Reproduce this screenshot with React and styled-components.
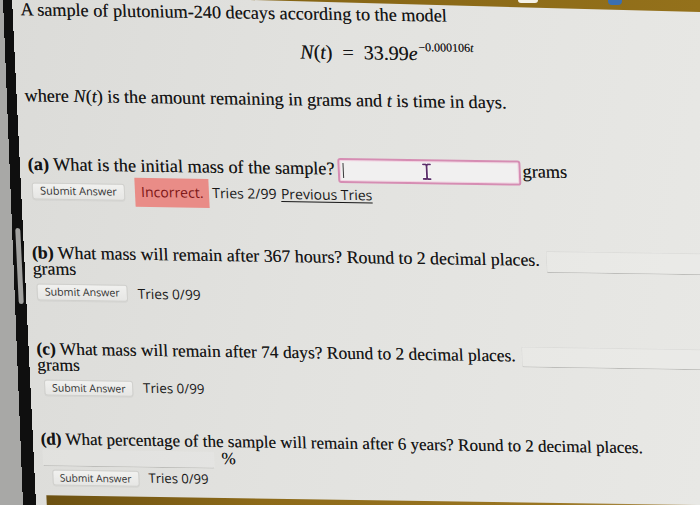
import React from "react";
import styled, { createGlobalStyle } from "styled-components";

const GlobalStyle = createGlobalStyle`
  html, body { margin: 0; padding: 0; background: #e2e2df; }
  body {
    font-family: "Liberation Serif", "Times New Roman", serif;
    color: #141414;
  }
`;

const Frame = styled.div`
  position: relative;
  width: 700px;
  height: 505px;
  overflow: hidden;
  background:
    linear-gradient(87.73deg, #a8a8a6 0 23px, transparent 23px),
    linear-gradient(87.28deg, #0f0f0f 0 36px, transparent 36px),
    linear-gradient(100deg, #dbdbd8 0%, #e2e2df 45%, #e8e8e5 100%);
`;

const ScrollThumb = styled.span`
  position: absolute;
  left: 17px;
  top: 228px;
  width: 5px;
  height: 76px;
  border-radius: 3px;
  background: #a2a2a0;
  transform: skewX(2.7deg);
`;

const TopEdge = styled.div`
  position: absolute;
  top: 0;
  left: 250px;
  right: 0;
  height: 12px;
  display: flex;
  align-items: flex-start;
  background: linear-gradient(90deg, #856414, #94711b);
  clip-path: polygon(0 0, 100% 0, 100% 100%);
`;

const EdgeIcon = styled.span`
  width: ${(p) => p.$w}px;
  height: ${(p) => p.$h}px;
  margin-left: ${(p) => p.$left}px;
  border-radius: 0 0 4px 4px;
  background: ${(p) => p.$color};
`;

const Content = styled.div`
  width: 760px;
  padding-left: 20px;
  display: flex;
  flex-direction: column;
  align-items: flex-start;
  transform: skew(2.7deg, 0.85deg);
  transform-origin: 0 0;
  text-shadow: 0 0 0.3px rgba(0, 0, 0, 0.5);
`;

const Prose = styled.p`
  margin: ${(p) => p.$top}px 0 0;
  font-size: 18.2px;
  line-height: 20px;
  white-space: nowrap;
`;

const Equation = styled.div`
  margin-top: ${(p) => p.$top}px;
  padding-left: 278px;
  font-size: 20px;
  line-height: 20px;
  white-space: nowrap;
`;

const Var = styled.i`
  font-style: italic;
`;

const Relation = styled.span`
  margin: 0 0.5em;
`;

const Sup = styled.span`
  display: inline-block;
  font-size: 12px;
  line-height: 0;
  vertical-align: 9px;
  margin-left: 1px;
`;

const Part = styled.section`
  margin-top: ${(p) => p.$top}px;
  font-size: ${(p) => p.$size}px;
  display: flex;
  flex-direction: column;
  align-items: flex-start;
`;

const Line = styled.div`
  margin-top: ${(p) => p.$gap || 0}px;
  line-height: ${(p) => p.$lh || 16}px;
  white-space: nowrap;
`;

const Label = styled.b`
  font-weight: 700;
`;

const FocusedBox = styled.span`
  display: inline-flex;
  align-items: center;
  box-sizing: border-box;
  width: 183px;
  height: 25px;
  margin: 0 2px 0 3px;
  padding-left: 3px;
  vertical-align: middle;
  border: 2px solid #d68db3;
  border-radius: 3px;
  background: #f1f0f0;
  box-shadow: inset 0 0 0 1px #f3d3e2;
`;

const Caret = styled.span`
  width: 1px;
  height: 15px;
  background: #3a3a3a;
`;

const Pointer = styled.svg`
  margin-left: 78px;
  flex: none;
`;

const AnswerField = styled.span`
  display: inline-block;
  box-sizing: border-box;
  width: ${(p) => p.$width}px;
  height: ${(p) => p.$height}px;
  margin: ${(p) => -(p.$height / 2 - 2)}px ${(p) => p.$right || 0}px
    ${(p) => -(p.$height / 2 - 2)}px ${(p) => p.$left}px;
  vertical-align: middle;
  background: rgba(255, 255, 255, 0.12);
  border: 1px solid rgba(0, 0, 0, ${(p) => (p.$faint ? 0 : 0.05)});
  border-bottom: 1px solid #bdbdba;
  border-radius: 2px;
`;

const Controls = styled.div`
  margin-top: ${(p) => p.$gap}px;
  margin-left: ${(p) => p.$indent}px;
  display: flex;
  align-items: center;
  line-height: 1;
  font-family: "Open Sans", "Liberation Sans", sans-serif;
  white-space: nowrap;
  text-shadow: none;
`;

const SubmitButton = styled.button`
  font-family: inherit;
  font-size: 0.6em;
  height: 1.55em;
  padding: 0 0.66em;
  line-height: 1;
  color: #333;
  background: linear-gradient(#f1f1ef, #e6e6e4);
  border: 1px solid #d0d0cd;
  border-radius: 3px;
  box-shadow: 0 1px 0 rgba(0, 0, 0, 0.04);
`;

const Verdict = styled.span`
  display: flex;
  align-items: center;
  height: 2.07em;
  margin-left: 0.71em;
  padding: 0 0.43em;
  font-size: 0.77em;
  color: #7e1616;
  background: #e98c87;
`;

const Tries = styled.span`
  font-size: 0.77em;
  margin-left: ${(p) => p.$gap}em;
  color: #181818;
`;

const PreviousLink = styled.span`
  margin-left: 0.32em;
  text-decoration: underline;
  text-underline-offset: 2px;
`;

const BottomEdge = styled.div`
  margin-top: ${(p) => p.$gap}px;
  margin-left: 3px;
  width: 720px;
  height: 18px;
  background: linear-gradient(90deg, #6c5112 0%, #8d6a19 30%, #9a7622 70%, #b59c68 100%);
`;

function IBeam() {
  return (
    <Pointer width="10" height="17" viewBox="0 0 10 17" aria-hidden="true">
      <path
        d="M1.5 1.2h2.4l1.1 1 1.1-1h2.4M5 2.2v12.6M1.5 15.8h2.4l1.1-1 1.1 1h2.4"
        fill="none"
        stroke="#fff"
        strokeWidth="3.2"
        strokeLinecap="round"
      />
      <path
        d="M1.5 1.2h2.4l1.1 1 1.1-1h2.4M5 2.2v12.6M1.5 15.8h2.4l1.1-1 1.1 1h2.4"
        fill="none"
        stroke="#5a2d68"
        strokeWidth="1.8"
        strokeLinecap="round"
      />
    </Pointer>
  );
}

export default function App() {
  return (
    <>
      <GlobalStyle />
      <Frame>
        <Content>
          <Prose $top={-1}>A sample of plutonium-240 decays according to the model</Prose>
          <Equation $top={18}>
            <Var>N</Var>(<Var>t</Var>)<Relation>=</Relation>33.99<Var>e</Var>
            <Sup>
              −0.000106<Var>t</Var>
            </Sup>
          </Equation>
          <Prose $top={28}>
            where <Var>N</Var>(<Var>t</Var>) is the amount remaining in grams and <Var>t</Var> is time in days.
          </Prose>

          <Part $top={48} $size={18.2}>
            <Line $lh={20}>
              <Label>(a)</Label> What is the initial mass of the sample?
              <FocusedBox>
                <Caret />
                <IBeam />
              </FocusedBox>
              grams
            </Line>
            <Controls $gap={-2} $indent={3}>
              <SubmitButton type="button">Submit Answer</SubmitButton>
              <Verdict>Incorrect.</Verdict>
              <Tries $gap={0.2}>
                Tries 2/99<PreviousLink>Previous Tries</PreviousLink>
              </Tries>
            </Controls>
          </Part>

          <Part $top={39} $size={17.8}>
            <Line>
              <Label>(b)</Label> What mass will remain after 367 hours? Round to 2 decimal places.
              <AnswerField $width={170} $height={22} $left={6} />
            </Line>
            <Line>grams</Line>
            <Controls $gap={7.3} $indent={3}>
              <SubmitButton type="button">Submit Answer</SubmitButton>
              <Tries $gap={0.72}>Tries 0/99</Tries>
            </Controls>
          </Part>

          <Part $top={40} $size={17.4}>
            <Line>
              <Label>(c)</Label> What mass will remain after 74 days? Round to 2 decimal places.
              <AnswerField $width={190} $height={21} $left={6} />
            </Line>
            <Line>grams</Line>
            <Controls $gap={7} $indent={6}>
              <SubmitButton type="button">Submit Answer</SubmitButton>
              <Tries $gap={0.72}>Tries 0/99</Tries>
            </Controls>
          </Part>

          <Part $top={36} $size={17}>
            <Line>
              <Label>(d)</Label> What percentage of the sample will remain after 6 years? Round to 2 decimal places.
            </Line>
            <Line $gap={1}>
              <AnswerField $width={172} $height={17} $left={1} $right={7} $faint />%
            </Line>
            <Controls $gap={4.9} $indent={9.5}>
              <SubmitButton type="button">Submit Answer</SubmitButton>
              <Tries $gap={0.72}>Tries 0/99</Tries>
            </Controls>
          </Part>

          <BottomEdge $gap={10.5} />
        </Content>
        <ScrollThumb />
        <TopEdge>
          <EdgeIcon $w={20} $h={3} $left={268} $color="#f4f1e6" />
          <EdgeIcon $w={14} $h={5} $left={70} $color="#3b6fb0" />
        </TopEdge>
      </Frame>
    </>
  );
}
